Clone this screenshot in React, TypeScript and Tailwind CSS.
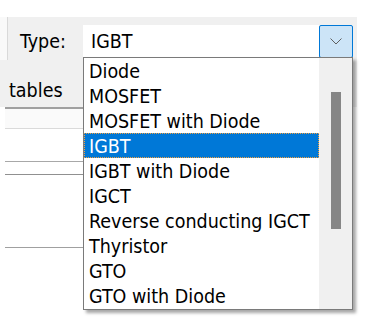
import React from "react";

const items = [
  "Diode",
  "MOSFET",
  "MOSFET with Diode",
  "IGBT",
  "IGBT with Diode",
  "IGCT",
  "Reverse conducting IGCT",
  "Thyristor",
  "GTO",
  "GTO with Diode",
];

export default function App() {
  return (
    <div className="relative w-[372px] h-[321px] overflow-hidden bg-white text-black font-['DejaVu_Sans_Condensed','DejaVu_Sans',sans-serif] text-[19.5px]">
      <div className="h-[17px]" />
      {/* gray dialog band */}
      <div className="w-[357px] h-[90px] bg-[#f0f0f0] flex flex-col">
        <div className="h-[43px] flex">
          <div className="w-[8px] h-full bg-[#f9f9f9] border-r border-[#d9d9d9]" />
          <div className="w-[75px] pl-[12px] pt-[8px] h-full leading-[33px]">Type:</div>
          <div className="mt-[8px] h-[33px] w-[270px] flex">
            <div className="w-[236px] bg-white pl-[8px] leading-[33px]">IGBT</div>
            <div className="w-[34px] bg-[#cce4f7] border border-[#0078d7] rounded-[2px] flex items-center justify-center">
              <svg width="12" height="7" viewBox="0 0 12 7">
                <path d="M0.5 0.5 L6 6 L11.5 0.5" fill="none" stroke="#606060" strokeWidth="1" />
              </svg>
            </div>
          </div>
        </div>
        <div className="flex-1 pl-[9px] pt-[19px] leading-[24px]">tables</div>
      </div>
      {/* table lines on the left */}
      <div className="ml-[5px] w-[347px] flex flex-col">
        <div className="h-[2px] bg-[#a0a0a0]" />
        <div className="h-[19px] bg-[#fafafa]" />
        <div className="h-[1px] bg-[#dadada]" />
        <div className="h-[32px] bg-white" />
        <div className="h-[1px] bg-[#a8a8a8]" />
        <div className="h-[12px] bg-white" />
        <div className="h-[1px] bg-[#909090]" />
        <div className="h-[72px] bg-white" />
        <div className="h-[1px] bg-[#a0a0a0]" />
      </div>

      {/* dropdown list overlay */}
      <div className="absolute left-[83px] top-[57px] w-[270px] h-[253px] border border-[#7a7a7a] bg-white flex shadow-[3px_3px_3px_rgba(0,0,0,0.35)]">
        <div className="w-[235px] flex flex-col">
          {items.map((it) =>
            it === "IGBT" ? (
              <div
                key={it}
                className="h-[25px] shrink-0 bg-[#0078d7] text-white border border-dotted border-[#f0a040] pl-[4px] pt-[2px] leading-[21px] whitespace-nowrap"
              >
                {it}
              </div>
            ) : (
              <div key={it} className="h-[25px] shrink-0 pl-[5px] pt-[3px] leading-[22px] whitespace-nowrap">
                {it}
              </div>
            )
          )}
        </div>
        <div className="w-[33px] bg-[#f0f0f0] pl-[12px] pt-[34px]">
          <div className="w-[10px] h-[137px] bg-[#868686]" />
        </div>
      </div>
    </div>
  );
}
